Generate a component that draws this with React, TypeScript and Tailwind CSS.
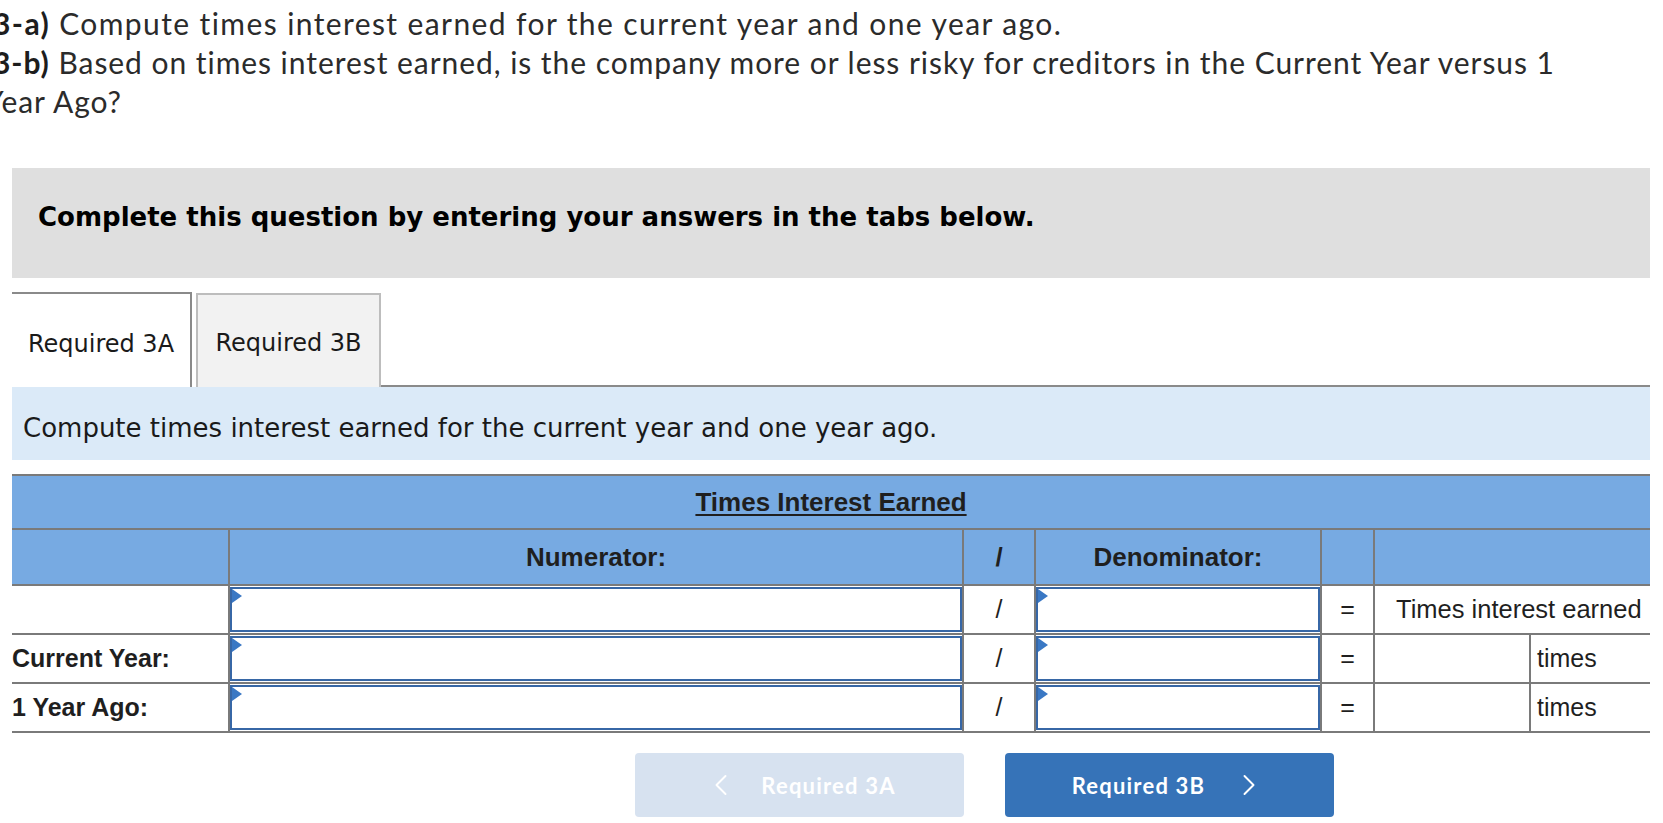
import { ChevronLeft, ChevronRight } from "lucide-react";

const proxima = "[font-family:Lato,'Open_Sans',sans-serif]";
const verdana = "[font-family:'DejaVu_Sans',Verdana,sans-serif]";
const arial = "[font-family:'Liberation_Sans',Arial,sans-serif]";

const rows = [
  { label: "", result: "head" },
  { label: "Current Year:", result: "times" },
  { label: "1 Year Ago:", result: "times" },
];

// little blue marker in the corner of each answer box
const Marker = () => (
  <span className="absolute left-[2px] top-[3px] h-0 w-0 border-y-[7px] border-l-[10px] border-y-transparent border-l-[#3a78c4]" />
);

const AnswerCell = () => (
  <td className="relative border-2 border-[#7a7a7a] p-0">
    <Marker />
    <input className="block h-[45px] w-full border-[2.5px] border-[#3767a6] bg-white outline-none" />
  </td>
);

export default function App() {
  return (
    <div className="min-h-screen w-full overflow-hidden bg-white">
      {/* question text */}
      <div className={`${proxima} pt-[4px] text-[30px] leading-[39px] tracking-[0.95px] text-[#2b2b2b]`}>
        <p className="-ml-[7px] whitespace-nowrap tracking-[1.4px]">
          <span className="font-bold text-[#1d1d1d]">3-a)</span> Compute times interest earned for the current year and one year ago.
        </p>
        <p className="-ml-[7px] whitespace-nowrap">
          <span className="font-bold text-[#1d1d1d]">3-b)</span> Based on times interest earned, is the company more or less risky for creditors in the Current Year versus 1
        </p>
        <p className="-ml-[15px] whitespace-nowrap">Year Ago?</p>
      </div>

      <div className={`${verdana} ml-[12px] mt-[47px] flex h-[110px] w-[1638px] items-center bg-[#dfdfdf] pb-[12px] pl-[26px] text-[26px] font-bold text-black`}>
        Complete this question by entering your answers in the tabs below.
      </div>

      {/* tabs */}
      <div className={`${verdana} ml-[12px] mt-[14px] flex w-[1638px] items-end text-[24px] text-[#1a1a1a]`}>
        <div className="flex h-[95px] w-[180px] items-center justify-center border-t-2 border-r-2 border-[#8a8a8a] bg-white pt-[6px]">
          Required 3A
        </div>
        <div className="ml-[4px] flex h-[94px] w-[185px] items-center justify-center border-2 border-b-0 border-[#bdbdbd] bg-[#f2f2f2] pt-[4px]">
          Required 3B
        </div>
        <div className="flex-1 border-b-2 border-[#8a8a8a]" />
      </div>

      <div className={`${verdana} ml-[12px] flex h-[73px] w-[1638px] items-center bg-[#dbeaf8] pl-[11px] pt-[9px] text-[26px] text-[#1a1a1a]`}>
        Compute times interest earned for the current year and one year ago.
      </div>

      {/* ratio table */}
      <table className={`${arial} ml-[12px] mt-[14px] w-[1638px] table-fixed border-collapse text-[25px] text-[#1f1f1f]`}>
        <colgroup>
          <col className="w-[217px]" />
          <col className="w-[734px]" />
          <col className="w-[72px]" />
          <col className="w-[286px]" />
          <col className="w-[53px]" />
          <col className="w-[156px]" />
          <col className="w-[120px]" />
        </colgroup>
        <thead>
          <tr className="h-[54px] bg-[#77aae2]">
            <th colSpan={7} className="border-y-2 border-[#7a7a7a] text-center text-[26px] font-bold">
              <span className="underline decoration-2 underline-offset-[3px]">Times Interest Earned</span>
            </th>
          </tr>
          <tr className="h-[56px] bg-[#77aae2] text-[26px] font-bold">
            <th className="border-y-2 border-r-2 border-[#7a7a7a]" />
            <th className="border-2 border-[#7a7a7a]">Numerator:</th>
            <th className="border-2 border-[#7a7a7a]">/</th>
            <th className="border-2 border-[#7a7a7a]">Denominator:</th>
            <th className="border-2 border-[#7a7a7a]" />
            <th colSpan={2} className="border-y-2 border-l-2 border-[#7a7a7a]" />
          </tr>
        </thead>
        <tbody>
          {rows.map((r, i) => (
            <tr key={i} className="h-[49px]">
              <td className="border-y-2 border-r-2 border-[#7a7a7a] p-0 text-left font-bold whitespace-nowrap">{r.label}</td>
              <AnswerCell />
              <td className="border-2 border-[#7a7a7a] text-center">/</td>
              <AnswerCell />
              <td className="border-2 border-[#7a7a7a] text-center">=</td>
              {r.result === "head" ? (
                <td colSpan={2} className="border-y-2 border-l-2 border-[#7a7a7a] pl-[21px] text-left whitespace-nowrap text-[25.5px]">
                  Times interest earned
                </td>
              ) : (
                <>
                  <td className="border-2 border-[#7a7a7a]" />
                  <td className="border-y-2 border-l-2 border-[#7a7a7a] pl-[6px] text-left">times</td>
                </>
              )}
            </tr>
          ))}
        </tbody>
      </table>

      {/* prev / next */}
      <div className={`${proxima} ml-[635px] mt-[20px] flex gap-[41px] text-[22px] font-bold tracking-[1.2px] text-white`}>
        <button className="flex h-[64px] w-[329px] items-center justify-center gap-[22px] rounded-[4px] bg-[#d7e2f0]">
          <ChevronLeft size={36} strokeWidth={1.3} />
          <span>Required 3A</span>
        </button>
        <button className="flex h-[64px] w-[329px] items-center justify-center gap-[26px] rounded-[4px] bg-[#3673b8]">
          <span>Required 3B</span>
          <ChevronRight size={36} strokeWidth={1.3} />
        </button>
      </div>
    </div>
  );
}
